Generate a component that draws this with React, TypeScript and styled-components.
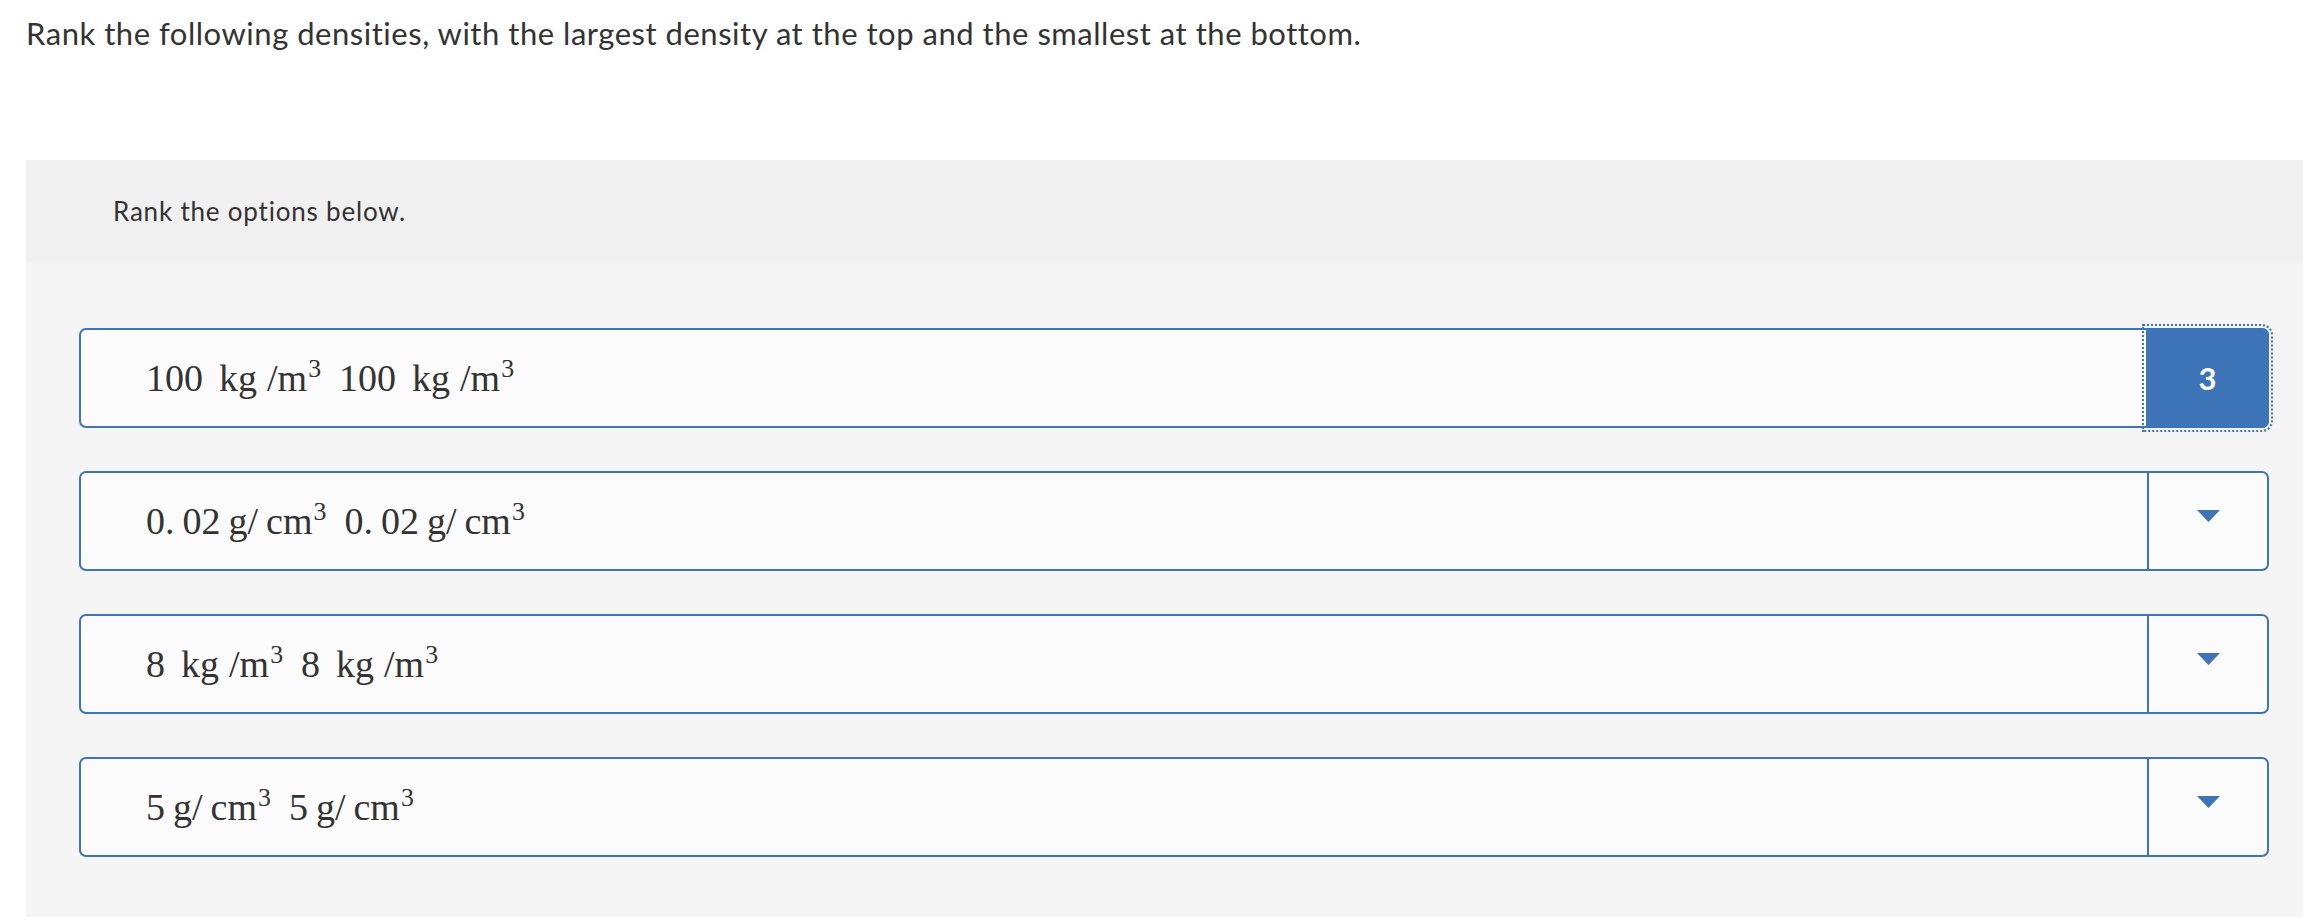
import styled, { createGlobalStyle } from "styled-components";

const GlobalStyle = createGlobalStyle`
  html, body {
    margin: 0;
    padding: 0;
    background: #ffffff;
  }
  body {
    font-family: "Lato", "Liberation Sans", sans-serif;
    color: #333333;
  }
`;

const Page = styled.div`
  padding: 15px 0 0 26px;
`;

const Prompt = styled.p`
  margin: 0;
  font-size: 31px;
  line-height: 36px;
  letter-spacing: 0.52px;
  color: #333333;
`;

const Panel = styled.section`
  margin-top: 109px;
  background: #f5f5f5;
`;

const PanelHeader = styled.div`
  height: 102px;
  display: flex;
  align-items: center;
  padding-left: 87px;
  background: #f0f0f0;
  font-size: 26px;
  line-height: 30px;
  letter-spacing: 0.8px;
  color: #333333;
`;

const RankList = styled.ol`
  list-style: none;
  margin: 0;
  padding: 66px 34px 60px 53px;
  display: flex;
  flex-direction: column;
  gap: 43px;
`;

const Row = styled.li`
  display: flex;
  height: 100px;
  box-sizing: border-box;
  border: 2px solid #3d75b8;
  border-radius: 7px;
  background: #fbfbfb;
`;

const Label = styled.div`
  flex: 1;
  display: flex;
  align-items: center;
  padding-left: 65px;
  font-family: "Liberation Serif", "DejaVu Serif", serif;
  font-size: 38px;
  color: #333333;
  white-space: nowrap;
`;

const Math = styled.span`
  display: inline-flex;
  align-items: baseline;
  gap: 18px;
`;

const Expr = styled.span`
  display: inline-flex;
  align-items: baseline;
`;

const Part = styled.span<{ $left?: number }>`
  margin-left: ${(p) => p.$left ?? 0}px;
`;

const Sup = styled.span`
  font-size: 0.68em;
  position: relative;
  top: -0.56em;
  margin-left: 1px;
`;

const Selector = styled.button<{ $selected?: boolean }>`
  width: 120px;
  flex: none;
  display: flex;
  align-items: center;
  justify-content: center;
  padding: 0;
  font-family: "Lato", "Liberation Sans", sans-serif;
  font-weight: 700;
  font-size: 31px;
  color: #ffffff;
  cursor: pointer;
  border: none;
  ${(p) =>
    p.$selected
      ? `
    margin: -2px -2px -2px 0;
    width: 123px;
    background: #3d75b8;
    border-radius: 0 7px 7px 0;
    outline: 2px dotted #3d75b8;
    outline-offset: 2px;
  `
      : `
    background: transparent;
    border-left: 2px solid #3d75b8;
    border-radius: 0 5px 5px 0;
  `}
`;

const Caret = styled.svg`
  width: 23px;
  height: 12px;
  margin-bottom: 10px;
`;

type Density = {
  value: string;
  unit: "kg/m" | "g/cm";
};

const items: { density: Density; rank?: number }[] = [
  { density: { value: "100", unit: "kg/m" }, rank: 3 },
  { density: { value: "0.02", unit: "g/cm" } },
  { density: { value: "8", unit: "kg/m" } },
  { density: { value: "5", unit: "g/cm" } },
];

function Density({ d }: { d: Density }) {
  const [whole, frac] = d.value.split(".");
  const number =
    frac !== undefined ? (
      <>
        <Part>{whole}.</Part>
        <Part $left={8}>{frac}</Part>
      </>
    ) : (
      <Part>{whole}</Part>
    );

  if (d.unit === "kg/m") {
    return (
      <Expr>
        {number}
        <Part $left={16}>kg</Part>
        <Part $left={10}>/m</Part>
        <Sup>3</Sup>
      </Expr>
    );
  }
  return (
    <Expr>
      {number}
      <Part $left={8}>g/</Part>
      <Part $left={8}>cm</Part>
      <Sup>3</Sup>
    </Expr>
  );
}

export default function App() {
  return (
    <>
      <GlobalStyle />
      <Page>
        <Prompt>
          Rank the following densities, with the largest density at the top and
          the smallest at the bottom.
        </Prompt>
        <Panel>
          <PanelHeader>Rank the options below.</PanelHeader>
          <RankList>
            {items.map((item, i) => (
              <Row key={i}>
                <Label>
                  <Math>
                    <Density d={item.density} />
                    <Density d={item.density} />
                  </Math>
                </Label>
                <Selector $selected={item.rank !== undefined}>
                  {item.rank !== undefined ? (
                    item.rank
                  ) : (
                    <Caret viewBox="0 0 23 12">
                      <path d="M0 0 H23 L11.5 12 Z" fill="#3d75b8" />
                    </Caret>
                  )}
                </Selector>
              </Row>
            ))}
          </RankList>
        </Panel>
      </Page>
    </>
  );
}
